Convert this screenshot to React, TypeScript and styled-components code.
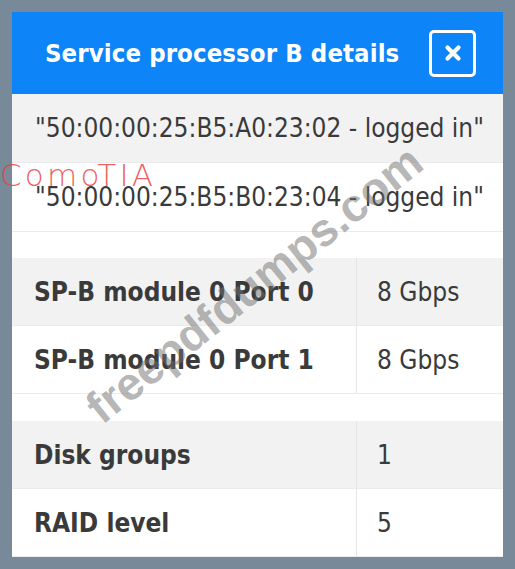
import React from "react";
import styled, { createGlobalStyle } from "styled-components";

const GlobalStyle = createGlobalStyle`
  html, body {
    margin: 0;
    padding: 0;
    background: #788999;
  }
  body {
    font-family: "DejaVu Sans Condensed", "DejaVu Sans", sans-serif;
    font-stretch: condensed;
  }
`;

const Page = styled.div`
  position: relative;
  width: 515px;
  height: 569px;
  padding: 12px 12px 0 12px;
  box-sizing: border-box;
  overflow: hidden;
`;

const Panel = styled.div`
  width: 491px;
  background: #ffffff;
  display: flex;
  flex-direction: column;
`;

const Header = styled.div`
  height: 82px;
  background: #0d84f7;
  display: flex;
  align-items: center;
  justify-content: space-between;
  padding: 0 27px 0 33px;
`;

const Title = styled.h1`
  margin: 0;
  color: #ffffff;
  font-size: 25.5px;
  font-weight: 700;
  letter-spacing: 0.1px;
`;

const CloseButton = styled.button`
  width: 47px;
  height: 47px;
  box-sizing: border-box;
  border: 3.5px solid #ffffff;
  border-radius: 5px;
  background: transparent;
  display: flex;
  align-items: center;
  justify-content: center;
  padding: 0;
  cursor: pointer;
`;

const LineRow = styled.div<{ $shade?: boolean }>`
  height: 68px;
  display: flex;
  align-items: center;
  justify-content: center;
  background: ${(p) => (p.$shade ? "#f2f2f2" : "#ffffff")};
  border-bottom: 1px solid #ebebeb;
  color: #3a3a3a;
  font-size: 26px;
  padding-left: 4px;
`;

const Spacer = styled.div<{ $h: number }>`
  height: ${(p) => p.$h}px;
  background: #ffffff;
`;

const Table = styled.div`
  display: grid;
  grid-template-columns: 345px 1fr;
`;

const Cell = styled.div<{ $shade?: boolean; $label?: boolean }>`
  height: 68px;
  display: flex;
  align-items: center;
  box-sizing: border-box;
  background: ${(p) => (p.$shade ? "#f2f2f2" : "#ffffff")};
  border-bottom: 1px solid #ebebeb;
  border-right: ${(p) => (p.$label ? "1px solid #e6e6e6" : "none")};
  padding-left: ${(p) => (p.$label ? "22px" : "20px")};
  color: #3a3a3a;
  font-size: 26px;
  font-weight: ${(p) => (p.$label ? 700 : 400)};
`;

const WatermarkRed = styled.span`
  position: absolute;
  left: 0px;
  top: 157px;
  color: rgba(232, 62, 62, 0.82);
  font-family: "DejaVu Sans", sans-serif;
  font-stretch: normal;
  font-weight: 200;
  font-size: 31px;
  letter-spacing: 3.2px;
  line-height: 1.2;
  pointer-events: none;
`;

const WatermarkGray = styled.span`
  position: absolute;
  left: 254px;
  top: 284px;
  transform: translate(-50%, -50%) rotate(-38.5deg);
  color: rgba(112, 112, 112, 0.52);
  font-family: "Liberation Sans", Arial, sans-serif;
  font-stretch: normal;
  font-weight: 700;
  font-size: 46px;
  line-height: 1;
  white-space: nowrap;
  pointer-events: none;
`;

const CloseIcon = () => (
  <svg width="18" height="18" viewBox="0 0 18 18">
    <path
      d="M3.5 3.5 L14.5 14.5 M14.5 3.5 L3.5 14.5"
      stroke="#ffffff"
      strokeWidth="4.2"
      strokeLinecap="round"
    />
  </svg>
);

const wwns = [
  '"50:00:00:25:B5:A0:23:02 - logged in"',
  '"50:00:00:25:B5:B0:23:04 - logged in"',
];

const ports = [
  ["SP-B module 0 Port 0", "8 Gbps"],
  ["SP-B module 0 Port 1", "8 Gbps"],
];

const disks = [
  ["Disk groups", "1"],
  ["RAID level", "5"],
];

const KVTable = ({ rows }: { rows: string[][] }) => (
  <Table>
    {rows.map(([k, v], i) => (
      <React.Fragment key={k}>
        <Cell $label $shade={i % 2 === 0}>
          {k}
        </Cell>
        <Cell $shade={i % 2 === 0}>{v}</Cell>
      </React.Fragment>
    ))}
  </Table>
);

export default function App() {
  return (
    <>
      <GlobalStyle />
      <Page>
        <Panel>
          <Header>
            <Title>Service processor B details</Title>
            <CloseButton aria-label="Close">
              <CloseIcon />
            </CloseButton>
          </Header>
          {wwns.map((w, i) => (
            <LineRow key={w} $shade={i % 2 === 0}>
              {w}
            </LineRow>
          ))}
          <Spacer $h={26} />
          <KVTable rows={ports} />
          <Spacer $h={27} />
          <KVTable rows={disks} />
        </Panel>
        <WatermarkRed>ComoTIA</WatermarkRed>
        <WatermarkGray>freepdfdumps.com</WatermarkGray>
      </Page>
    </>
  );
}
